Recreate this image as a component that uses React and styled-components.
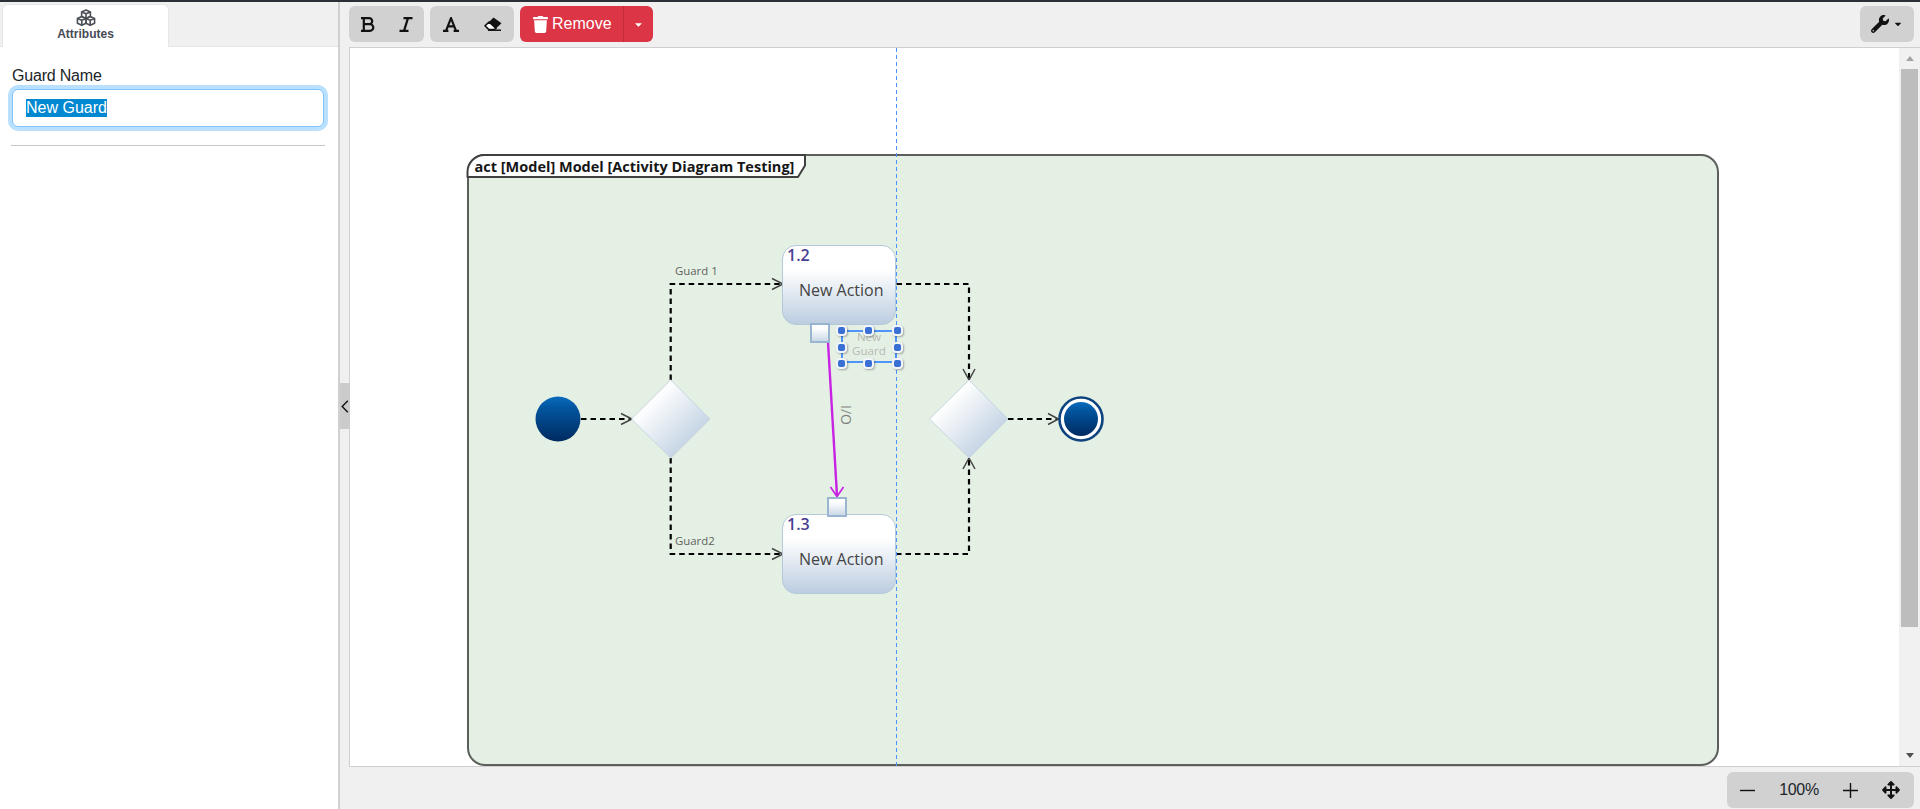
import React, { useEffect, useRef } from "react";
import styled, { createGlobalStyle } from "styled-components";
import { FaTrash, FaWrench, FaArrowsAlt, FaCaretDown } from "react-icons/fa";

const Global = createGlobalStyle`
  html, body { margin: 0; padding: 0; height: 100%; overflow: hidden; background: #fff; }
  body { font-family: "Liberation Sans", Arial, sans-serif; color: #212529; }
  #root { height: 100%; }
  * { box-sizing: border-box; }
`;

const Page = styled.div`
  height: 809px;
  display: flex;
  border-top: 2px solid #2b2f36;
`;
const Left = styled.aside`
  width: 340px;
  flex: none;
  display: flex;
  flex-direction: column;
  background: #fff;
  border-right: 2px solid #d0d0d0;
`;
const TabBar = styled.div`
  height: 45px;
  flex: none;
  background: #f0f0f0;
  border-bottom: 1px solid #e4e4ea;
  padding: 2px 0 0 2px;
`;
const Tab = styled.div`
  width: 167px;
  height: 43px;
  background: #fff;
  border: 1px solid #e6e6ea;
  border-bottom: 0;
  border-radius: 6px 6px 0 0;
  display: flex;
  flex-direction: column;
  align-items: center;
  padding-top: 4px;
  font-size: 12px;
  font-weight: 700;
  color: #454a54;
  line-height: 14px;
  gap: 1px;
`;
const CubesSvg = styled.svg`
  flex: none;
  display: block;
`;
const Form = styled.div`
  padding: 17px 14px 0 12px;
`;
const FieldLabel = styled.label`
  display: block;
  font-size: 16px;
  line-height: 24px;
  color: #212529;
  height: 25px;
  letter-spacing: -0.2px;
`;
const GuardInput = styled.input`
  display: block;
  width: 312px;
  height: 38px;
  padding: 0 13px;
  font: 16px/24px "Liberation Sans", Arial, sans-serif;
  color: #495057;
  border: 1px solid #80c4ff;
  border-radius: 6px;
  outline: none;
  box-shadow: 0 0 0 4px rgba(0, 140, 255, 0.27);
  &::selection { background: #0288d1; color: #fff; }
`;
const Rule = styled.hr`
  margin: 18px -1px 0 -1px;
  border: 0;
  border-top: 1px solid #c8c8c8;
`;
const Right = styled.main`
  flex: 1;
  min-width: 0;
  position: relative;
  display: flex;
  flex-direction: column;
  background: #f0f0f0;
`;
const Toolbar = styled.div`
  height: 45px;
  flex: none;
  display: flex;
  align-items: flex-start;
  padding: 4px 6px 0 9px;
  gap: 6px;
`;
const Spacer = styled.div`
  flex: 1;
`;
const Group = styled.div`
  display: flex;
  height: 36px;
  background: #d1d1d1;
  border-radius: 6px;
`;
const IconBtn = styled.button`
  width: ${(p) => p.$w}px;
  height: 36px;
  padding: 0;
  border: 0;
  background: transparent;
  display: flex;
  align-items: center;
  justify-content: center;
  color: #111;
`;
const RemoveGroup = styled.div`
  display: flex;
  height: 36px;
  background: #dc3545;
  border-radius: 6px;
  color: #fff;
  overflow: hidden;
`;
const RemoveBtn = styled.button`
  width: 104px;
  border: 0;
  border-right: 1px solid #c22b3a;
  background: transparent;
  color: #fff;
  font: 16px "Liberation Sans", Arial, sans-serif;
  display: flex;
  align-items: center;
  gap: 3px;
  padding: 0 0 0 12px;
`;
const CaretBtn = styled.button`
  width: 29px;
  border: 0;
  background: transparent;
  color: #fff;
  display: flex;
  align-items: center;
  justify-content: center;
  padding: 0;
  font-size: 11px;
`;
const WrenchBtn = styled(IconBtn)`
  gap: 4px;
  font-size: 18px;
  background: #d1d1d1;
  border-radius: 6px;
`;
const SmallCaret = styled.span`
  display: flex;
  font-size: 10px;
`;
const Workspace = styled.div`
  flex: none;
  height: 720px;
  margin-left: 9px;
  display: flex;
  background: #fff;
  border-top: 1px solid #cfcfcf;
  border-bottom: 1px solid #cfcfcf;
  border-left: 1px solid #cfcfcf;
`;
const Canvas = styled.div`
  flex: 1;
  position: relative;
  overflow: hidden;
  background: #fff;
`;
const Scroll = styled.div`
  width: 21px;
  flex: none;
  background: #f1f1f1;
  display: flex;
  flex-direction: column;
  align-items: center;
`;
const ScrollArrow = styled.div`
  height: 21px;
  flex: none;
  display: flex;
  align-items: center;
  justify-content: center;
  width: 100%;
`;
const Tri = styled.div`
  width: 0;
  height: 0;
  border-left: 4.5px solid transparent;
  border-right: 4.5px solid transparent;
  ${(p) => (p.$down ? "border-top: 5px solid #505050;" : "border-bottom: 5px solid #a3a3a3;")}
`;
const Thumb = styled.div`
  width: 17px;
  height: 558px;
  background: #bdbdbd;
  flex: none;
`;
const ScrollFill = styled.div`
  flex: 1;
`;
const StatusBar = styled.div`
  flex: 1;
  display: flex;
  justify-content: flex-end;
  align-items: flex-start;
  padding: 5px 6px 0 0;
`;
const ZoomGroup = styled.div`
  width: 187px;
  height: 36px;
  background: #d1d1d1;
  border-radius: 6px;
  display: flex;
  align-items: center;
  color: #111;
  padding-left: 13px;
`;
const ZoomValue = styled.span`
  width: 50px;
  margin-left: 19px;
  font-size: 16px;
  color: #212529;
  text-align: center;
  letter-spacing: -0.3px;
`;
const ZoomSvg = styled.svg`
  flex: none;
  margin-left: ${(p) => p.$ml || 0}px;
`;
const MoveIcon = styled.span`
  display: flex;
  margin-left: 24px;
`;
const Collapse = styled.div`
  position: absolute;
  left: 0;
  top: 381px;
  width: 10px;
  height: 46px;
  background: #cbcbcb;
  display: flex;
  align-items: center;
  justify-content: center;
`;

/* diagram */
const Plane = styled.div`
  position: absolute;
  left: -350px;
  top: -48px;
  width: 1920px;
  height: 809px;
`;
const Frame = styled.div`
  position: absolute;
  left: 467px;
  top: 154px;
  width: 1252px;
  height: 612px;
  background: #e5f0e4;
  border: 2px solid #5d5f5d;
  border-radius: 18px;
`;
const FrameTitle = styled.div`
  position: absolute;
  left: 474.5px;
  top: 156px;
  height: 21px;
  font: 700 14.5px/21px "Open Sans", "Noto Sans", sans-serif;
  color: #161616;
  white-space: nowrap;
`;
const Layer = styled.svg`
  position: absolute;
  left: 0;
  top: 0;
`;
const Action = styled.div`
  position: absolute;
  left: ${(p) => p.$x}px;
  top: ${(p) => p.$y}px;
  width: 114px;
  height: 80px;
  border: 1.5px solid #b3c9da;
  border-radius: 14px;
  background: linear-gradient(180deg, #ffffff 30%, #bccde0 100%);
`;
const ActionNo = styled.div`
  position: absolute;
  left: 4px;
  top: -1px;
  font: 600 16px/20px "Open Sans", "Noto Sans", sans-serif;
  color: #483f93;
`;
const ActionName = styled.div`
  position: absolute;
  left: 16px;
  top: 33px;
  font: 400 16px/22px "Open Sans", "Noto Sans", sans-serif;
  color: #444;
  white-space: nowrap;
`;
const Pin = styled.div`
  position: absolute;
  left: ${(p) => p.$x}px;
  top: ${(p) => p.$y}px;
  width: 20px;
  height: 20px;
  border: 2px solid #9ab5cf;
  background: linear-gradient(180deg, #ffffff 20%, #ccd9e7 100%);
`;
const EdgeLabel = styled.div`
  position: absolute;
  left: ${(p) => p.$x}px;
  top: ${(p) => p.$y}px;
  font: 400 11.4px/14px "Open Sans", "Noto Sans", sans-serif;
  color: #5f635f;
  white-space: nowrap;
`;
const IoLabel = styled(EdgeLabel)`
  transform: rotate(90deg);
  transform-origin: center;
  font-size: 14px;
  color: #808480;
`;
const GuardBox = styled.div`
  position: absolute;
  left: 841px;
  top: 330px;
  width: 56px;
  height: 33px;
  border: 2px solid #4f94fb;
  display: flex;
  align-items: center;
  justify-content: center;
  text-align: center;
  padding-bottom: 5px;
  font: 400 11.6px/14.5px "Open Sans", "Noto Sans", sans-serif;
  color: #b5b8b5;
`;
const Handle = styled.div`
  position: absolute;
  left: ${(p) => p.$x - 5.5}px;
  top: ${(p) => p.$y - 5.5}px;
  width: 11px;
  height: 11px;
  border-radius: 4px;
  background: #3a70d4;
  border: 2px solid #f2f5fb;
  box-shadow: 1px 1px 2px rgba(0, 0, 0, 0.3);
`;
const Guide = styled.div`
  position: absolute;
  left: 895.5px;
  top: 48px;
  height: 720px;
  width: 1.5px;
  background: repeating-linear-gradient(180deg, #4b93ff 0 4px, transparent 4px 7px);
`;

const CubesIcon = () => (
  <CubesSvg width="20" height="17" viewBox="0 0 24 21" fill="none" stroke="#4b4f58" strokeWidth="2" strokeLinejoin="round">
    <path d="M12 1.2l5.4 2.4v5.6L12 11.6 6.6 9.2V3.6z" />
    <path d="M6.6 3.6L12 6l5.4-2.4M12 6v5.6" />
    <path d="M6.8 9.2l5.2 2.4v6l-5.2 2.4L1.4 17.6v-6z" />
    <path d="M1.4 11.6l5.4 2.4 5.2-2.4M6.8 14v6" />
    <path d="M17.2 9.2l5.4 2.4v6L17.2 20 12 17.6v-6z" />
    <path d="M12 11.6l5.2 2.4 5.4-2.4M17.2 14v6" />
  </CubesSvg>
);
const BoldIcon = () => (
  <svg width="15" height="15" viewBox="0 0 15 15" fill="none" stroke="#111" strokeWidth="2.2">
    <path d="M0 1.2h8.2a3 3 0 0 1 0 6H2.8M2.8 1.2v12.6M0 13.8h9a3.3 3.3 0 0 0 0-6.6H2.8" />
  </svg>
);
const ItalicIcon = () => (
  <svg width="14" height="15" viewBox="0 0 14 15" fill="none" stroke="#111" strokeWidth="2.2">
    <path d="M4.5 1.1h9M0.5 13.9h9M9 1.1L5 13.9" />
  </svg>
);
const FontIcon = () => (
  <svg width="16" height="15" viewBox="0 0 16 15" fill="none" stroke="#111" strokeWidth="2.2">
    <path d="M0 13.9h5.4M10.6 13.9H16M3 13.9L8 1.2 13 13.9M4.6 9.4h6.8" />
  </svg>
);
const EraserIcon = () => (
  <svg width="18" height="14" viewBox="0 0 18 14">
    <path d="M9.5 0.5L17.5 6.2 12 11.4 5 5z" fill="#111" />
    <path d="M5 5L1 8.8 4.8 12.6H10L12 11.4z" fill="#fff" stroke="#111" strokeWidth="1.6" strokeLinejoin="round" />
    <path d="M4 13.2h13" stroke="#111" strokeWidth="1.5" />
  </svg>
);
const MinusIcon = ({ ml }) => (
  <ZoomSvg $ml={ml} width="15" height="15" viewBox="0 0 15 15" stroke="#111" strokeWidth="1.4">
    <path d="M0 7.5h15" />
  </ZoomSvg>
);
const PlusIcon = ({ ml }) => (
  <ZoomSvg $ml={ml} width="15" height="15" viewBox="0 0 15 15" stroke="#111" strokeWidth="1.4">
    <path d="M0 7.5h15M7.5 0v15" />
  </ZoomSvg>
);
const Chevron = () => (
  <svg width="8" height="13" viewBox="0 0 8 13" fill="none" stroke="#111" strokeWidth="1.4">
    <path d="M6.8 0.8L1.2 6.5l5.6 5.7" />
  </svg>
);

const DASHED = [
  "M581 419H632",
  "M670.7 380V284H782",
  "M670.7 458V554H782",
  "M896.5 284H969V380",
  "M896 554H969V458",
  "M1008 419H1058",
];
const ARROWS = [
  "M621 413.5L632 419L621 424.5",
  "M772 278.5L783 284L772 289.5",
  "M772 548.5L783 554L772 559.5",
  "M963 369L969 380L975 369",
  "M963 469L969 458L975 469",
  "M1048 413.5L1058.5 419L1048 424.5",
];

const Diagram = () => (
  <Plane>
    <Frame />
    <Layer width="1920" height="809" viewBox="0 0 1920 809">
      <defs>
        <linearGradient id="dia" x1="0.15" y1="0.15" x2="0.85" y2="0.85">
          <stop offset="0.15" stopColor="#ffffff" />
          <stop offset="1" stopColor="#bccde0" />
        </linearGradient>
        <linearGradient id="ball" x1="0" y1="0" x2="0" y2="1">
          <stop offset="0" stopColor="#0a6dbd" />
          <stop offset="0.25" stopColor="#02559f" />
          <stop offset="1" stopColor="#002a60" />
        </linearGradient>
      </defs>
      <path d="M467.5 177V172a17 17 0 0 1 17-17H805V165.5L798 177z" fill="#fff" stroke="#3f403f" strokeWidth="2" strokeLinejoin="round" />
      {DASHED.map((d) => (
        <path key={d} d={d} fill="none" stroke="#000" strokeWidth="2.2" strokeDasharray="5.5 4" />
      ))}
      {ARROWS.map((d) => (
        <path key={d} d={d} fill="none" stroke="#444" strokeWidth="1.5" />
      ))}
      <circle cx="558" cy="419" r="22.5" fill="url(#ball)" />
      <path d="M670.7 380L710 419L670.7 458L631.5 419z" fill="url(#dia)" stroke="#c5d5e2" strokeWidth="1" />
      <path d="M969 380L1008 419L969 458L929.5 419z" fill="url(#dia)" stroke="#c5d5e2" strokeWidth="1" />
      <circle cx="1081" cy="419" r="21.5" fill="#fff" stroke="#0f437f" strokeWidth="2.6" />
      <circle cx="1081" cy="419" r="17" fill="url(#ball)" />
      <path d="M828 342L837 496" fill="none" stroke="#c822e4" strokeWidth="2.4" />
      <path d="M830.5 487L837 496.5L843.5 487" fill="none" stroke="#c822e4" strokeWidth="1.7" />
    </Layer>
    <FrameTitle>act [Model] Model [Activity Diagram Testing]</FrameTitle>
    <EdgeLabel $x={675} $y={264}>Guard 1</EdgeLabel>
    <EdgeLabel $x={675} $y={534}>Guard2</EdgeLabel>
    <IoLabel $x={835.5} $y={408}>I/O</IoLabel>
    <Action $x={782} $y={245}>
      <ActionNo>1.2</ActionNo>
      <ActionName>New Action</ActionName>
    </Action>
    <Action $x={782} $y={514}>
      <ActionNo>1.3</ActionNo>
      <ActionName>New Action</ActionName>
    </Action>
    <Pin $x={810} $y={323} />
    <Pin $x={827} $y={497} />
    <Guide />
    <GuardBox>New<br />Guard</GuardBox>
    {[[841, 330], [868, 330], [897, 330], [841, 347], [897, 347], [841, 363], [868, 363], [897, 363]].map(([x, y]) => (
      <Handle key={`${x}-${y}`} $x={x} $y={y} />
    ))}
  </Plane>
);

export default function App() {
  const ref = useRef(null);
  useEffect(() => {
    ref.current?.focus();
    ref.current?.select();
  }, []);
  return (
    <>
      <Global />
      <Page>
        <Left>
          <TabBar>
            <Tab>
              <CubesIcon />
              <span>Attributes</span>
            </Tab>
          </TabBar>
          <Form>
            <FieldLabel htmlFor="guard">Guard Name</FieldLabel>
            <GuardInput id="guard" ref={ref} defaultValue="New Guard" />
            <Rule />
          </Form>
        </Left>
        <Right>
          <Toolbar>
            <Group>
              <IconBtn $w={38}><BoldIcon /></IconBtn>
              <IconBtn $w={37}><ItalicIcon /></IconBtn>
            </Group>
            <Group>
              <IconBtn $w={42}><FontIcon /></IconBtn>
              <IconBtn $w={42}><EraserIcon /></IconBtn>
            </Group>
            <RemoveGroup>
              <RemoveBtn><FaTrash size={17} />Remove</RemoveBtn>
              <CaretBtn><FaCaretDown /></CaretBtn>
            </RemoveGroup>
            <Spacer />
            <WrenchBtn $w={54}>
              <FaWrench />
              <SmallCaret><FaCaretDown /></SmallCaret>
            </WrenchBtn>
          </Toolbar>
          <Workspace>
            <Canvas><Diagram /></Canvas>
            <Scroll>
              <ScrollArrow><Tri /></ScrollArrow>
              <Thumb />
              <ScrollFill />
              <ScrollArrow><Tri $down /></ScrollArrow>
            </Scroll>
          </Workspace>
          <StatusBar>
            <ZoomGroup>
              <MinusIcon />
              <ZoomValue>100%</ZoomValue>
              <PlusIcon ml={19} />
              <MoveIcon><FaArrowsAlt size={18} /></MoveIcon>
            </ZoomGroup>
          </StatusBar>
          <Collapse><Chevron /></Collapse>
        </Right>
      </Page>
    </>
  );
}
